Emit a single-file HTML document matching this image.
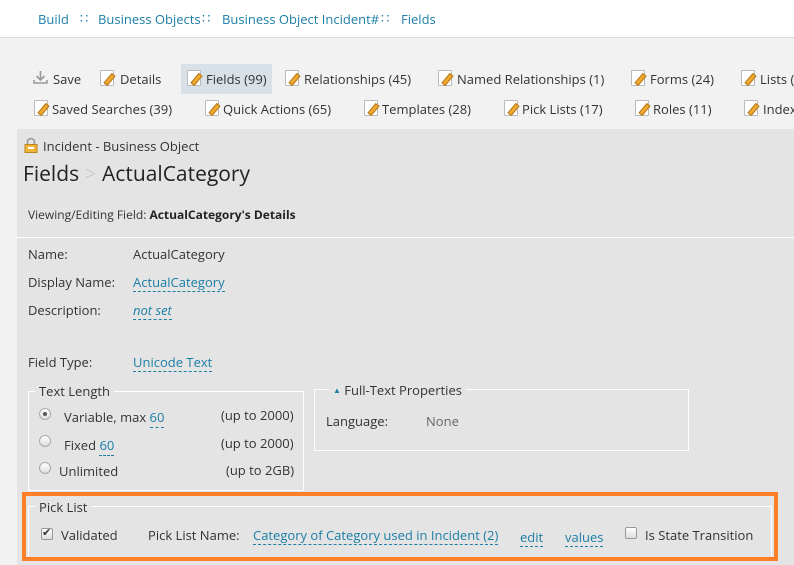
<!DOCTYPE html>
<html><head><meta charset="utf-8"><style>
*{margin:0;padding:0;box-sizing:border-box}
body{width:794px;height:565px;overflow:hidden;background:#f2f2f2;font-family:"Open Sans","Liberation Sans",sans-serif;font-size:13px;color:#333;position:relative}
.a{position:absolute;white-space:nowrap;line-height:16px}
.top{position:absolute;left:0;top:0;width:794px;height:38px;background:#fff;border-bottom:1px solid #ddd}
.bc{color:#1b7ea6}
.pen{position:absolute;width:14px;height:16px;background:#fff;border:1px solid #bbb;border-radius:1px}
.pen:after{content:"";position:absolute;left:2px;top:6px;width:11px;height:3px;background:#f0a830;transform:rotate(-50deg);border:1px solid #b67a1a}
.lnk{color:#1b7ea6;border-bottom:1px dashed #1b7ea6;line-height:16px;padding-bottom:1px}
.fs{position:absolute;border:1px solid #fff}
.leg{position:absolute;background:#e4e4e4;padding:0 4px;line-height:16px;white-space:nowrap}
.rad{position:absolute;width:12px;height:12px;border-radius:50%;border:1px solid #aaa;background:linear-gradient(#fff,#ddd)}
.chk{position:absolute;width:12px;height:12px;border:1px solid #999;border-radius:2px;background:linear-gradient(#fff,#ddd)}
</style></head><body>
<div class="top"></div>
<span class="a bc" style="left:38px;top:11px">Build</span>
<span class="a bc" style="left:80px;top:10px">∷</span>
<span class="a bc" style="left:98px;top:11px">Business Objects</span>
<span class="a bc" style="left:202px;top:10px">∷</span>
<span class="a bc" style="left:222px;top:11px">Business Object Incident#</span>
<span class="a bc" style="left:381px;top:10px">∷</span>
<span class="a bc" style="left:401px;top:11px">Fields</span>

<div style="position:absolute;left:181px;top:64px;width:91px;height:30px;background:#d8e1e7"></div>
<svg class="a" style="left:33px;top:70px" width="15" height="15"><path d="M7.5 1v9M3.5 6l4 4 4-4M1 10v3h13v-3" stroke="#999" stroke-width="1.6" fill="none"/></svg>
<span class="a" style="left:53px;top:71px">Save</span>
<span class="pen" style="left:100px;top:70px"></span><span class="a" style="left:120px;top:71px">Details</span>
<span class="pen" style="left:187px;top:70px"></span><span class="a" style="left:206px;top:71px">Fields (99)</span>
<span class="pen" style="left:285px;top:70px"></span><span class="a" style="left:304px;top:71px">Relationships (45)</span>
<span class="pen" style="left:438px;top:70px"></span><span class="a" style="left:457px;top:71px">Named Relationships (1)</span>
<span class="pen" style="left:631px;top:70px"></span><span class="a" style="left:650px;top:71px">Forms (24)</span>
<span class="pen" style="left:741px;top:70px"></span><span class="a" style="left:760px;top:71px">Lists (</span>
<span class="pen" style="left:34px;top:100px"></span><span class="a" style="left:52px;top:101px">Saved Searches (39)</span>
<span class="pen" style="left:205px;top:100px"></span><span class="a" style="left:223px;top:101px">Quick Actions (65)</span>
<span class="pen" style="left:364px;top:100px"></span><span class="a" style="left:382px;top:101px">Templates (28)</span>
<span class="pen" style="left:504px;top:100px"></span><span class="a" style="left:522px;top:101px">Pick Lists (17)</span>
<span class="pen" style="left:635px;top:100px"></span><span class="a" style="left:653px;top:101px">Roles (11)</span>
<span class="pen" style="left:744px;top:100px"></span><span class="a" style="left:763px;top:101px">Index</span>

<div style="position:absolute;left:17px;top:129px;width:777px;height:436px;background:#e4e4e4"></div>
<div style="position:absolute;left:17px;top:237px;width:777px;height:1px;background:#fff"></div>
<svg class="a" style="left:24px;top:137px" width="14" height="16"><path d="M3.5 8V5a3.5 3.5 0 0 1 7 0v3" stroke="#999" stroke-width="1.6" fill="none"/><rect x="1" y="7.5" width="12" height="8" fill="#f1b637" stroke="#b88520"/><rect x="4" y="10" width="6" height="2" fill="#fff"/></svg>
<span class="a" style="left:43px;top:138px">Incident - Business Object</span>
<span class="a" style="left:23px;top:161px;font-size:21px;line-height:26px;color:#222">Fields <span style="color:#ccc">&gt;</span> ActualCategory</span>
<span class="a" style="left:28px;top:207px;font-size:12px">Viewing/Editing Field: <b style="color:#222">ActualCategory's Details</b></span>

<span class="a" style="left:28px;top:246px">Name:</span><span class="a" style="left:133px;top:246px">ActualCategory</span>
<span class="a" style="left:28px;top:274px">Display Name:</span><span class="a lnk" style="left:133px;top:274px">ActualCategory</span>
<span class="a" style="left:28px;top:302px">Description:</span><span class="a lnk" style="left:133px;top:302px;font-style:italic">not set</span>
<span class="a" style="left:28px;top:354px">Field Type:</span><span class="a lnk" style="left:133px;top:354px">Unicode Text</span>

<div class="fs" style="left:28px;top:391px;width:276px;height:100px"></div>
<span class="leg" style="left:35px;top:383px">Text Length</span>
<span class="rad" style="left:39px;top:408px"></span><span style="position:absolute;left:43px;top:412px;width:4px;height:4px;border-radius:50%;background:#555"></span>
<span class="a" style="left:64px;top:409px">Variable, max <span class="lnk">60</span></span><span class="a" style="left:221px;top:407px">(up to 2000)</span>
<span class="rad" style="left:39px;top:435px"></span>
<span class="a" style="left:64px;top:437px">Fixed <span class="lnk">60</span></span><span class="a" style="left:221px;top:435px">(up to 2000)</span>
<span class="rad" style="left:39px;top:462px"></span>
<span class="a" style="left:59px;top:463px">Unlimited</span><span class="a" style="left:226px;top:462px">(up to 2GB)</span>

<div class="fs" style="left:314px;top:389px;width:375px;height:62px"></div>
<span class="leg" style="left:329px;top:382px"><span style="color:#1b7ea6;font-size:8px;vertical-align:2px">▲</span> Full-Text Properties</span>
<span class="a" style="left:326px;top:413px">Language:</span><span class="a" style="left:426px;top:413px;color:#666">None</span>

<div style="position:absolute;left:22px;top:492px;width:756px;height:69px;border:4px solid #fd7f28"></div>
<div class="fs" style="left:28px;top:506px;width:744px;height:50px;border-bottom:none"></div>
<span class="leg" style="left:35px;top:499px">Pick List</span>
<span class="chk" style="left:41px;top:528px"></span><span class="a" style="left:42px;top:525px;font-size:11px">✔</span>
<span class="a" style="left:61px;top:527px">Validated</span>
<span class="a" style="left:148px;top:527px">Pick List Name:</span>
<span class="a lnk" style="left:253px;top:527px">Category of Category used in Incident (2)</span>
<span class="a lnk" style="left:520px;top:529px">edit</span>
<span class="a lnk" style="left:565px;top:529px">values</span>
<span class="chk" style="left:625px;top:527px"></span>
<span class="a" style="left:645px;top:527px">Is State Transition</span>
</body></html>
